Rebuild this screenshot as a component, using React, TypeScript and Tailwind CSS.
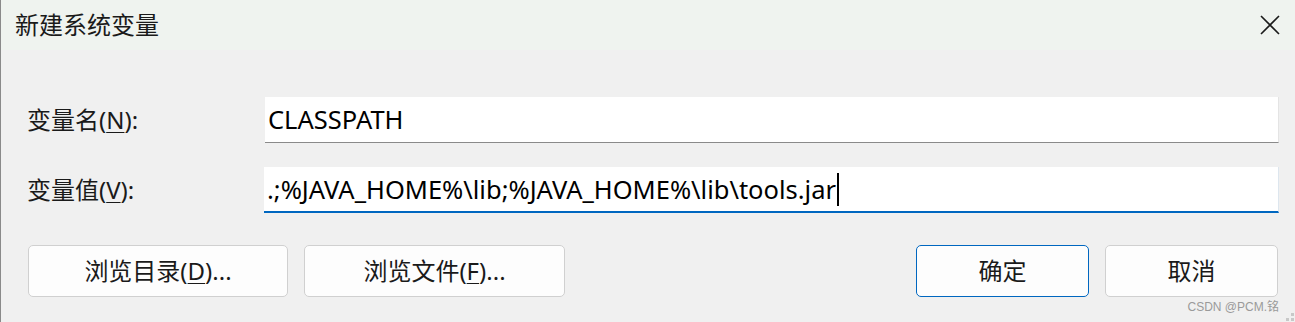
const font = {
  fontFamily: '"Noto Sans", "Noto Sans CJK SC", sans-serif',
};

const Underlined = ({ ch }: { ch: string }) => (
  <span className="underline decoration-1 underline-offset-[3px]">{ch}</span>
);

const Label = ({ text, hot }: { text: string; hot: string }) => (
  <div className="text-[24px] text-[#1a1a1a]">
    {text}(<Underlined ch={hot} />):
  </div>
);

const Button = ({ children, primary = false, className = '' }: { children: React.ReactNode; primary?: boolean; className?: string }) => (
  <button
    className={
      'flex h-[52px] items-center justify-center rounded-[5px] bg-[#fdfdfd] text-[24px] text-[#1a1a1a] ' +
      (primary ? 'border-[1.5px] border-[#0067c0] ' : 'border border-[#d0d0d0] ') +
      className
    }
  >
    {children}
  </button>
);

export default function App() {
  return (
    <div className="relative h-[322px] w-[1295px] overflow-hidden border-l border-[#8a8a8a] bg-[#f0f0f0]" style={font}>
      {/* Title bar */}
      <div className="flex h-[50px] items-center justify-between bg-[#eff3ef] pl-[14px] pr-[14px]">
        <span className="text-[24px] text-[#1a1a1a]">新建系统变量</span>
        <svg width="22" height="22" viewBox="0 0 22 22" fill="none" stroke="#1a1a1a" strokeWidth="1.6">
          <path d="M2 2 L20 20 M20 2 L2 20" />
        </svg>
      </div>

      {/* Fields */}
      <div className="flex flex-col gap-[24px] pt-[47px] pl-[26px] pr-[16px]">
        <div className="flex items-center">
          <div className="w-[238px]">
            <Label text="变量名" hot="N" />
          </div>
          <div className="flex h-[46px] flex-1 items-center border-b border-[#8a8a8a] border-r border-r-[#e4e4e4] bg-white pl-[3px] text-[25.5px] text-black">
            CLASSPATH
          </div>
        </div>
        <div className="flex items-center">
          <div className="w-[237px]">
            <Label text="变量值" hot="V" />
          </div>
          <div className="flex h-[46px] flex-1 items-center border-b-2 border-[#0067c0] border-r border-r-[#dde6ee] bg-white pl-[3px] text-[25.5px] text-black">
            .;%JAVA_HOME%\lib;%JAVA_HOME%\lib\tools.jar
            <span className="ml-[1px] inline-block h-[33px] w-[1.5px] bg-black" />
          </div>
        </div>
      </div>

      {/* Buttons */}
      <div className="flex pt-[32px] pl-[27px] pr-[17px]">
        <Button className="w-[260px]">
          浏览目录(<Underlined ch="D" />)...
        </Button>
        <Button className="ml-[16px] w-[261px]">
          浏览文件(<Underlined ch="F" />)...
        </Button>
        <div className="flex-1" />
        <Button primary className="w-[173px]">
          确定
        </Button>
        <Button className="ml-[16px] w-[173px]">
          取消
        </Button>
      </div>

      {/* Watermark */}
      <div className="absolute bottom-[6px] right-[16px] text-[12px] text-[#9a9a9a]" style={{ fontFamily: '"Liberation Sans", "Noto Sans CJK SC", sans-serif' }}>
        CSDN @PCM.铭
      </div>

      {/* Resize grip */}
      <div className="absolute bottom-[1px] right-[1px] grid grid-cols-2 gap-[2px]">
        <span className="h-[3px] w-[3px]" />
        <span className="h-[3px] w-[3px] bg-[#c8c8c8]" />
        <span className="h-[3px] w-[3px] bg-[#c8c8c8]" />
        <span className="h-[3px] w-[3px] bg-[#c8c8c8]" />
      </div>
    </div>
  );
}
